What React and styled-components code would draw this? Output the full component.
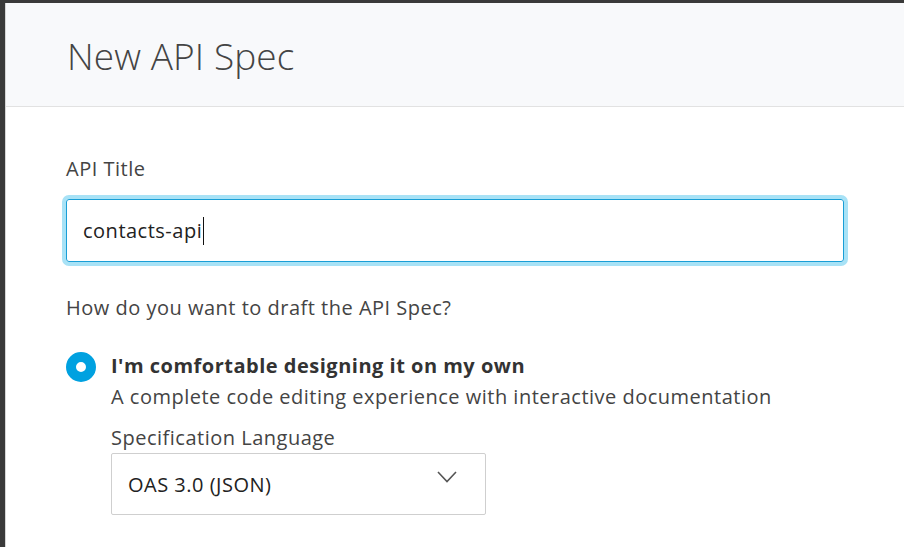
import React from 'react';
import styled, { createGlobalStyle } from 'styled-components';

const GlobalStyle = createGlobalStyle`
	html, body {
		margin: 0;
		padding: 0;
		background: #3a3a3a;
		font-family: 'Open Sans', 'Liberation Sans', sans-serif;
	}
	* {
		box-sizing: border-box;
	}
`;

const Backdrop = styled.div`
	height: 100vh;
	padding: 3px 0 0 5px;
	overflow: hidden;
	background: #3a3a3a;
`;

const Modal = styled.div`
	height: 100%;
	background: #fff;
	border-left: 1px solid #d6d6d6;
`;

const Header = styled.div`
	height: 104px;
	display: flex;
	align-items: center;
	padding: 0 61px;
	background: #f8f9fb;
	border-bottom: 1px solid #e2e2e2;
`;

const Title = styled.h1`
	margin: 0;
	padding-top: 2px;
	font-size: 37px;
	font-weight: 300;
	color: #444;
	letter-spacing: 0.1px;
`;

const Body = styled.div`
	padding: 50px 60px 0 60px;
`;

const Label = styled.div`
	font-size: 20px;
	letter-spacing: 0.5px;
	line-height: 24px;
	white-space: nowrap;
	color: ${(p) => (p.dark ? '#333' : '#444')};
	font-weight: ${(p) => (p.bold ? 700 : 400)};
	margin-top: ${(p) => p.top || 0}px;
`;

const TextBox = styled.div`
	margin-top: 18px;
	height: 63px;
	display: flex;
	align-items: center;
	padding: 0 16px;
	border: 1px solid #199ed6;
	border-radius: 3px;
	box-shadow: 0 0 0 4px #a8e2f6;
	font-size: 20px;
	letter-spacing: 0.5px;
	color: #222;
`;

const Caret = styled.span`
	display: inline-block;
	width: 1px;
	height: 28px;
	margin-left: 1px;
	background: #111;
`;

const Option = styled.div`
	display: flex;
	gap: 15px;
	margin-top: 34px;
`;

const Radio = styled.div`
	flex: none;
	width: 30px;
	height: 30px;
	margin-top: -2px;
	border-radius: 50%;
	border: 10px solid #00a1e0;
	background: #fff;
`;

const OptionText = styled.div`
	display: flex;
	flex-direction: column;
`;

const Select = styled.div`
	margin-top: 3px;
	width: 375px;
	height: 62px;
	display: flex;
	align-items: center;
	justify-content: space-between;
	padding: 0 28px 0 16px;
	border: 1px solid #cfcfcf;
	border-radius: 2px;
	font-size: 20px;
	letter-spacing: 0.5px;
	color: #222;
`;

const Chevron = () => (
	<svg width='20' height='12' viewBox='0 0 20 12' style={{ marginTop: -14 }}>
		<path d='M1 1 L10 10.5 L19 1' fill='none' stroke='#555' strokeWidth='1.6' />
	</svg>
);

export default function App() {
	return (
		<>
			<GlobalStyle />
			<Backdrop>
				<Modal>
					<Header>
						<Title>New API Spec</Title>
					</Header>
					<Body>
						<Label>API Title</Label>
						<TextBox>
							contacts-api
							<Caret />
						</TextBox>
						<Label top={34}>How do you want to draft the API Spec?</Label>
						<Option>
							<Radio />
							<OptionText>
								<Label bold dark>
									I'm comfortable designing it on my own
								</Label>
								<Label top={7}>A complete code editing experience with interactive documentation</Label>
								<Label top={17}>Specification Language</Label>
								<Select>
									OAS 3.0 (JSON)
									<Chevron />
								</Select>
							</OptionText>
						</Option>
					</Body>
				</Modal>
			</Backdrop>
		</>
	);
}
